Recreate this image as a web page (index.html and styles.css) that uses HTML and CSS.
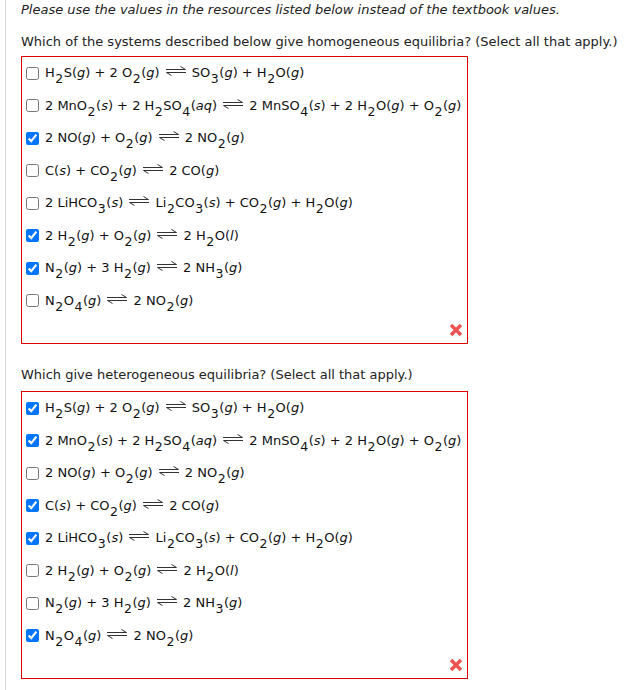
FILE: index.html
```html
<!DOCTYPE html>
<html>
<head>
<meta charset="utf-8">
<link rel="stylesheet" href="styles.css">
</head>
<body>
<div class="page">
  <p class="note">Please use the values in the resources listed below instead of the textbook values.</p>

  <p class="question q1">Which of the systems described below give homogeneous equilibria? (Select all that apply.)</p>
  <div class="box">
    <label class="opt"><input type="checkbox"><span class="eqn">H<sub>2</sub>S(<i>g</i>) + 2 O<sub>2</sub>(<i>g</i>) <svg class="arr" width="20" height="10" viewBox="0 0 20 10"><path d="M0 3.5H19.5M19.5 3.5L14.5 0.5M20 6.5H0.5M0.5 6.5L5.5 9.5"/></svg> SO<sub>3</sub>(<i>g</i>) + H<sub>2</sub>O(<i>g</i>)</span></label>
    <label class="opt"><input type="checkbox"><span class="eqn">2 MnO<sub>2</sub>(<i>s</i>) + 2 H<sub>2</sub>SO<sub>4</sub>(<i>aq</i>) <svg class="arr" width="20" height="10" viewBox="0 0 20 10"><path d="M0 3.5H19.5M19.5 3.5L14.5 0.5M20 6.5H0.5M0.5 6.5L5.5 9.5"/></svg> 2 MnSO<sub>4</sub>(<i>s</i>) + 2 H<sub>2</sub>O(<i>g</i>) + O<sub>2</sub>(<i>g</i>)</span></label>
    <label class="opt"><input type="checkbox" checked><span class="eqn">2 NO(<i>g</i>) + O<sub>2</sub>(<i>g</i>) <svg class="arr" width="20" height="10" viewBox="0 0 20 10"><path d="M0 3.5H19.5M19.5 3.5L14.5 0.5M20 6.5H0.5M0.5 6.5L5.5 9.5"/></svg> 2 NO<sub>2</sub>(<i>g</i>)</span></label>
    <label class="opt"><input type="checkbox"><span class="eqn">C(<i>s</i>) + CO<sub>2</sub>(<i>g</i>) <svg class="arr" width="20" height="10" viewBox="0 0 20 10"><path d="M0 3.5H19.5M19.5 3.5L14.5 0.5M20 6.5H0.5M0.5 6.5L5.5 9.5"/></svg> 2 CO(<i>g</i>)</span></label>
    <label class="opt"><input type="checkbox"><span class="eqn">2 LiHCO<sub>3</sub>(<i>s</i>) <svg class="arr" width="20" height="10" viewBox="0 0 20 10"><path d="M0 3.5H19.5M19.5 3.5L14.5 0.5M20 6.5H0.5M0.5 6.5L5.5 9.5"/></svg> Li<sub>2</sub>CO<sub>3</sub>(<i>s</i>) + CO<sub>2</sub>(<i>g</i>) + H<sub>2</sub>O(<i>g</i>)</span></label>
    <label class="opt"><input type="checkbox" checked><span class="eqn">2 H<sub>2</sub>(<i>g</i>) + O<sub>2</sub>(<i>g</i>) <svg class="arr" width="20" height="10" viewBox="0 0 20 10"><path d="M0 3.5H19.5M19.5 3.5L14.5 0.5M20 6.5H0.5M0.5 6.5L5.5 9.5"/></svg> 2 H<sub>2</sub>O(<i>l</i>)</span></label>
    <label class="opt"><input type="checkbox" checked><span class="eqn">N<sub>2</sub>(<i>g</i>) + 3 H<sub>2</sub>(<i>g</i>) <svg class="arr" width="20" height="10" viewBox="0 0 20 10"><path d="M0 3.5H19.5M19.5 3.5L14.5 0.5M20 6.5H0.5M0.5 6.5L5.5 9.5"/></svg> 2 NH<sub>3</sub>(<i>g</i>)</span></label>
    <label class="opt"><input type="checkbox"><span class="eqn">N<sub>2</sub>O<sub>4</sub>(<i>g</i>) <svg class="arr" width="20" height="10" viewBox="0 0 20 10"><path d="M0 3.5H19.5M19.5 3.5L14.5 0.5M20 6.5H0.5M0.5 6.5L5.5 9.5"/></svg> 2 NO<sub>2</sub>(<i>g</i>)</span></label>
    <div class="mark"><svg width="14" height="14" viewBox="0 0 14 14"><path d="M2 2L12 12M12 2L2 12"/></svg></div>
  </div>

  <p class="question q2">Which give heterogeneous equilibria? (Select all that apply.)</p>
  <div class="box">
    <label class="opt"><input type="checkbox" checked><span class="eqn">H<sub>2</sub>S(<i>g</i>) + 2 O<sub>2</sub>(<i>g</i>) <svg class="arr" width="20" height="10" viewBox="0 0 20 10"><path d="M0 3.5H19.5M19.5 3.5L14.5 0.5M20 6.5H0.5M0.5 6.5L5.5 9.5"/></svg> SO<sub>3</sub>(<i>g</i>) + H<sub>2</sub>O(<i>g</i>)</span></label>
    <label class="opt"><input type="checkbox" checked><span class="eqn">2 MnO<sub>2</sub>(<i>s</i>) + 2 H<sub>2</sub>SO<sub>4</sub>(<i>aq</i>) <svg class="arr" width="20" height="10" viewBox="0 0 20 10"><path d="M0 3.5H19.5M19.5 3.5L14.5 0.5M20 6.5H0.5M0.5 6.5L5.5 9.5"/></svg> 2 MnSO<sub>4</sub>(<i>s</i>) + 2 H<sub>2</sub>O(<i>g</i>) + O<sub>2</sub>(<i>g</i>)</span></label>
    <label class="opt"><input type="checkbox"><span class="eqn">2 NO(<i>g</i>) + O<sub>2</sub>(<i>g</i>) <svg class="arr" width="20" height="10" viewBox="0 0 20 10"><path d="M0 3.5H19.5M19.5 3.5L14.5 0.5M20 6.5H0.5M0.5 6.5L5.5 9.5"/></svg> 2 NO<sub>2</sub>(<i>g</i>)</span></label>
    <label class="opt"><input type="checkbox" checked><span class="eqn">C(<i>s</i>) + CO<sub>2</sub>(<i>g</i>) <svg class="arr" width="20" height="10" viewBox="0 0 20 10"><path d="M0 3.5H19.5M19.5 3.5L14.5 0.5M20 6.5H0.5M0.5 6.5L5.5 9.5"/></svg> 2 CO(<i>g</i>)</span></label>
    <label class="opt"><input type="checkbox" checked><span class="eqn">2 LiHCO<sub>3</sub>(<i>s</i>) <svg class="arr" width="20" height="10" viewBox="0 0 20 10"><path d="M0 3.5H19.5M19.5 3.5L14.5 0.5M20 6.5H0.5M0.5 6.5L5.5 9.5"/></svg> Li<sub>2</sub>CO<sub>3</sub>(<i>s</i>) + CO<sub>2</sub>(<i>g</i>) + H<sub>2</sub>O(<i>g</i>)</span></label>
    <label class="opt"><input type="checkbox"><span class="eqn">2 H<sub>2</sub>(<i>g</i>) + O<sub>2</sub>(<i>g</i>) <svg class="arr" width="20" height="10" viewBox="0 0 20 10"><path d="M0 3.5H19.5M19.5 3.5L14.5 0.5M20 6.5H0.5M0.5 6.5L5.5 9.5"/></svg> 2 H<sub>2</sub>O(<i>l</i>)</span></label>
    <label class="opt"><input type="checkbox"><span class="eqn">N<sub>2</sub>(<i>g</i>) + 3 H<sub>2</sub>(<i>g</i>) <svg class="arr" width="20" height="10" viewBox="0 0 20 10"><path d="M0 3.5H19.5M19.5 3.5L14.5 0.5M20 6.5H0.5M0.5 6.5L5.5 9.5"/></svg> 2 NH<sub>3</sub>(<i>g</i>)</span></label>
    <label class="opt"><input type="checkbox" checked><span class="eqn">N<sub>2</sub>O<sub>4</sub>(<i>g</i>) <svg class="arr" width="20" height="10" viewBox="0 0 20 10"><path d="M0 3.5H19.5M19.5 3.5L14.5 0.5M20 6.5H0.5M0.5 6.5L5.5 9.5"/></svg> 2 NO<sub>2</sub>(<i>g</i>)</span></label>
    <div class="mark"><svg width="14" height="14" viewBox="0 0 14 14"><path d="M2 2L12 12M12 2L2 12"/></svg></div>
  </div>
</div>
</body>
</html>
```

FILE: styles.css
```css
html, body {
  margin: 0;
  padding: 0;
  background: #ffffff;
}

body {
  font-family: "DejaVu Sans", Verdana, sans-serif;
  font-size: 13px;
  color: #222222;
}

.page {
  margin-left: 5px;
  border-left: 1px solid #d4d4d4;
  padding: 2px 0 12px 15px;
  min-height: 676px;
}

.note {
  margin: 0 0 16px;
  line-height: 16px;
  font-style: italic;
}

.question {
  margin: 0;
  line-height: 16px;
}

.q1 {
  margin-bottom: 6px;
}

.q2 {
  margin-top: 23px;
  margin-bottom: 8px;
}

.box {
  width: 445px;
  border: 1px solid #e00000;
  display: flex;
  flex-direction: column;
}

.opt {
  height: 32.5px;
  display: flex;
  align-items: center;
  white-space: nowrap;
}

.opt input {
  width: 13px;
  height: 13px;
  margin: 0 3px 0 4px;
  flex: none;
}

.eqn {
  margin-left: 3px;
  color: #111111;
  line-height: 16px;
}

.eqn sub {
  font-size: 12.5px;
  vertical-align: -6px;
  line-height: 0;
  margin: 0 0.5px;
}

.eqn i {
  font-style: italic;
}

.arr {
  vertical-align: 1px;
  margin: 0 2px;
}

.arr path {
  fill: none;
  stroke: #333333;
  stroke-width: 1;
}

.mark {
  height: 26px;
  display: flex;
  justify-content: flex-end;
  align-items: center;
  padding-right: 4px;
}

.mark path {
  stroke: #ef5350;
  stroke-width: 3.4;
  fill: none;
}
```
